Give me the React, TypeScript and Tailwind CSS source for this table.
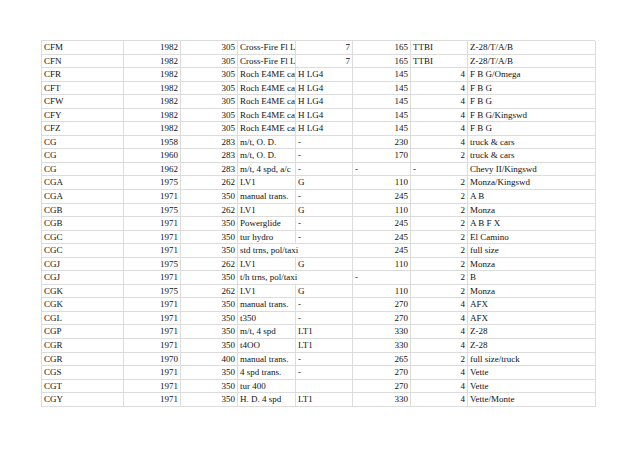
import React from 'react'

type Row = [string, string, string, string, string | null, string, string, string]

// null in the 5th slot means the description spills over it (like a spreadsheet)
const rows: Row[] = [
  ['CFM', '1982', '305', 'Cross-Fire Fl L', '7', '165', 'TTBI', 'Z-28/T/A/B'],
  ['CFN', '1982', '305', 'Cross-Fire Fl L', '7', '165', 'TTBI', 'Z-28/T/A/B'],
  ['CFR', '1982', '305', 'Roch E4ME carb', 'H LG4', '145', '4', 'F B G/Omega'],
  ['CFT', '1982', '305', 'Roch E4ME carb', 'H LG4', '145', '4', 'F B G'],
  ['CFW', '1982', '305', 'Roch E4ME carb', 'H LG4', '145', '4', 'F B G'],
  ['CFY', '1982', '305', 'Roch E4ME carb', 'H LG4', '145', '4', 'F B G/Kingswd'],
  ['CFZ', '1982', '305', 'Roch E4ME carb', 'H LG4', '145', '4', 'F B G'],
  ['CG', '1958', '283', 'm/t, O. D.', '-', '230', '4', 'truck & cars'],
  ['CG', '1960', '283', 'm/t, O. D.', '-', '170', '2', 'truck & cars'],
  ['CG', '1962', '283', 'm/t, 4 spd, a/c', '-', '-', '-', 'Chevy II/Kingswd'],
  ['CGA', '1975', '262', 'LV1', 'G', '110', '2', 'Monza/Kingswd'],
  ['CGA', '1971', '350', 'manual trans.', '-', '245', '2', 'A B'],
  ['CGB', '1975', '262', 'LV1', 'G', '110', '2', 'Monza'],
  ['CGB', '1971', '350', 'Powerglide', '-', '245', '2', 'A B F X'],
  ['CGC', '1971', '350', 'tur hydro', '-', '245', '2', 'El Camino'],
  ['CGC', '1971', '350', 'std trns, pol/taxi', null, '245', '2', 'full size'],
  ['CGJ', '1975', '262', 'LV1', 'G', '110', '2', 'Monza'],
  ['CGJ', '1971', '350', 't/h trns, pol/taxi', null, '-', '2', 'B'],
  ['CGK', '1975', '262', 'LV1', 'G', '110', '2', 'Monza'],
  ['CGK', '1971', '350', 'manual trans.', '-', '270', '4', 'AFX'],
  ['CGL', '1971', '350', 't350', '-', '270', '4', 'AFX'],
  ['CGP', '1971', '350', 'm/t, 4 spd', 'LT1', '330', '4', 'Z-28'],
  ['CGR', '1971', '350', 't4OO', 'LT1', '330', '4', 'Z-28'],
  ['CGR', '1970', '400', 'manual trans.', '-', '265', '2', 'full size/truck'],
  ['CGS', '1971', '350', '4 spd trans.', '-', '270', '4', 'Vette'],
  ['CGT', '1971', '350', 'tur 400', '', '270', '4', 'Vette'],
  ['CGY', '1971', '350', 'H. D. 4 spd', 'LT1', '330', '4', 'Vette/Monte'],
]

function Cell({ value, span }: { value: string; span?: boolean }) {
  const numeric = /^\d+$/.test(value)
  return (
    <div
      className={
        'overflow-hidden whitespace-nowrap border-r border-b border-[#dcdcdc] px-[2px] leading-[13px] ' +
        (numeric ? 'text-right ' : 'text-left ') +
        (span ? 'col-span-2' : '')
      }
    >
      {value}
    </div>
  )
}

export default function App() {
  return (
    <div className="min-h-[451px] w-[638px] bg-white pt-[40px] pl-[41px]">
      <div
        className="grid w-[554px] auto-rows-[13.55px] grid-cols-[82px_57px_57px_58px_57px_58px_57px_128px] border-t border-l border-[#dcdcdc] text-[9px] text-[#111]"
        style={{ fontFamily: '"Liberation Serif", "Times New Roman", serif' }}
      >
        {rows.map((r, i) => (
          <React.Fragment key={i}>
            <Cell value={r[0]} />
            <Cell value={r[1]} />
            <Cell value={r[2]} />
            <Cell value={r[3]} span={r[4] === null} />
            {r[4] !== null && <Cell value={r[4]} />}
            <Cell value={r[5]} />
            <Cell value={r[6]} />
            <Cell value={r[7]} />
          </React.Fragment>
        ))}
      </div>
    </div>
  )
}
